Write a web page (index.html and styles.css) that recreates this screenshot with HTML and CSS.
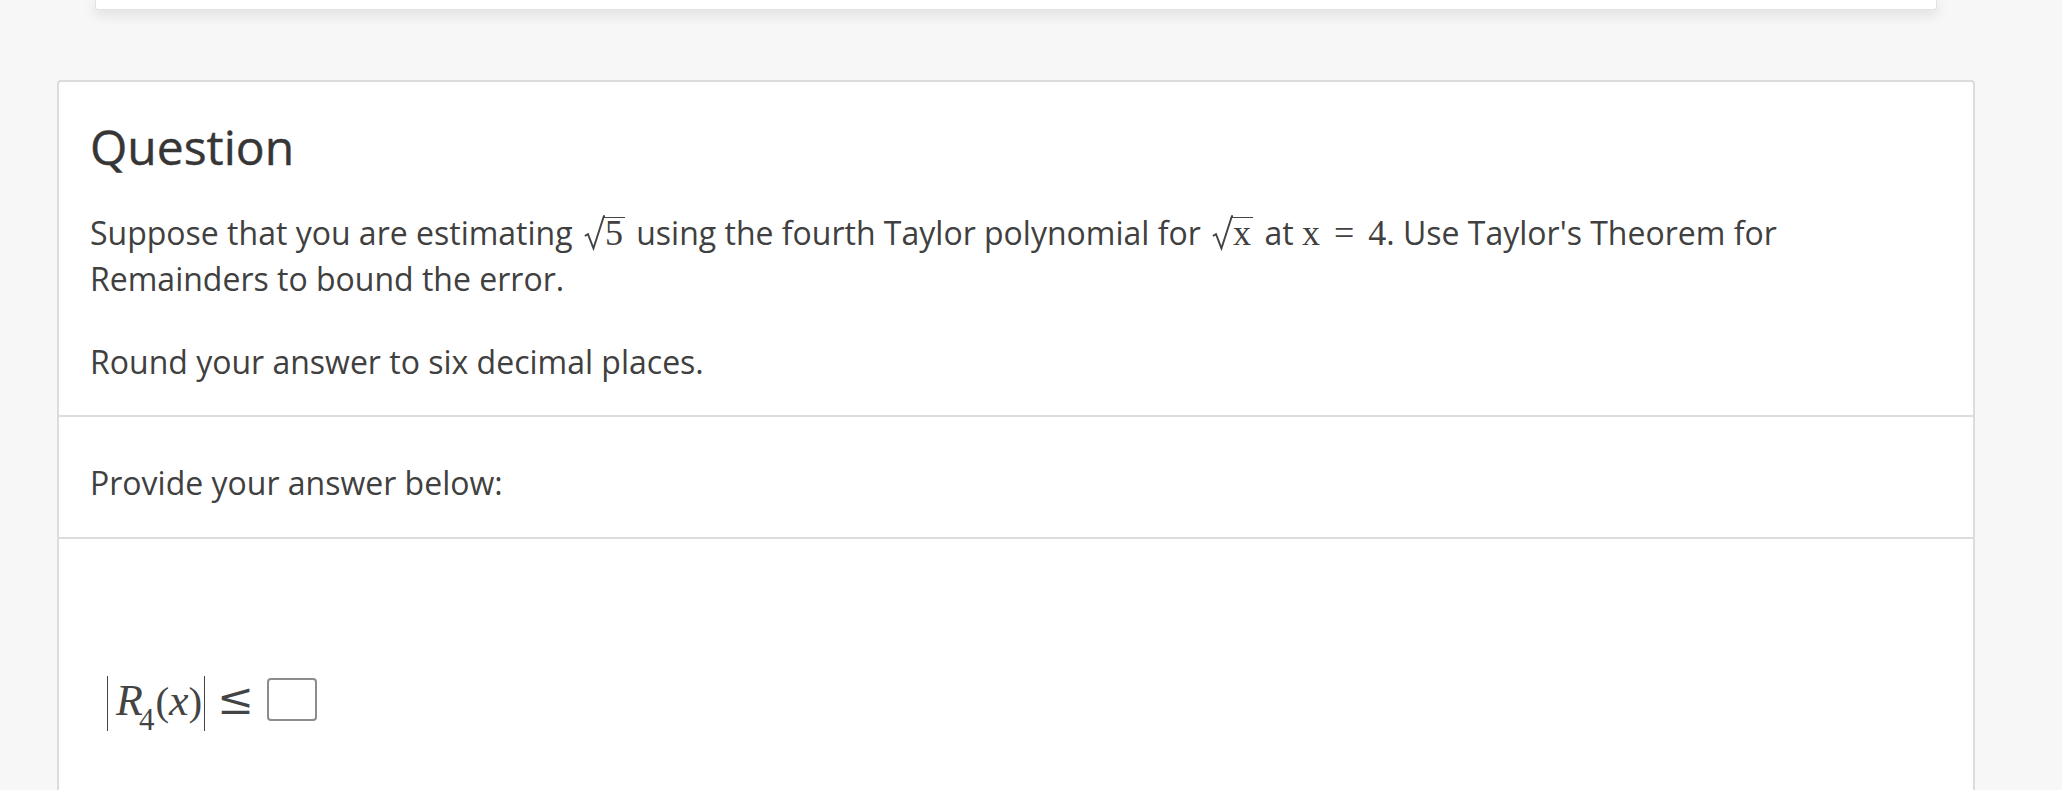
FILE: index.html
```html
<!DOCTYPE html>
<html lang="en">
<head>
<meta charset="utf-8">
<title>Question</title>
<link rel="stylesheet" href="styles.css">
</head>
<body>
  <div class="top-card"></div>
  <main class="question-card">
    <section class="section section-question">
      <h2 class="title">Question</h2>
      <p class="text">Suppose that you are estimating <span class="math"><span class="sqrt"><svg class="sqrt-sign" viewBox="0 0 20 36" preserveAspectRatio="none"><path d="M0.8 20.5 L3.8 18.6 L9 32.5 L18.9 1.2 L20 1.2" fill="none" stroke="#444" stroke-width="1.8" stroke-linejoin="miter"/></svg><span class="radicand">5</span></span></span> using the fourth Taylor polynomial for <span class="math"><span class="sqrt"><svg class="sqrt-sign" viewBox="0 0 20 36" preserveAspectRatio="none"><path d="M0.8 20.5 L3.8 18.6 L9 32.5 L18.9 1.2 L20 1.2" fill="none" stroke="#444" stroke-width="1.8" stroke-linejoin="miter"/></svg><span class="radicand">x</span></span></span> at <span class="math">x <span class="op">=</span> 4</span>. Use Taylor's Theorem for Remainders to bound the error.</p>
      <p class="text">Round your answer to six decimal places.</p>
    </section>
    <section class="section section-prompt">
      <p class="text">Provide your answer below:</p>
    </section>
    <section class="section section-answer">
      <div class="answer-row">
        <span class="abs"><span class="var">R</span><span class="sub">4</span><span class="paren">(</span><span class="var">x</span><span class="paren">)</span></span>
        <span class="leq">≤</span>
        <span class="input-box"></span>
      </div>
    </section>
  </main>
</body>
</html>
```

FILE: styles.css
```css
html, body {
  margin: 0;
  padding: 0;
}

body {
  background: #f7f7f7;
  font-family: "Open Sans", "Noto Sans", sans-serif;
  color: #404040;
  height: 790px;
  overflow: hidden;
}

.top-card {
  height: 9px;
  margin: 0 125px 0 95px;
  background: #fff;
  border: 1px solid #e2e2e2;
  border-top: none;
  border-radius: 0 0 3px 3px;
  box-shadow: 0 4px 14px rgba(0, 0, 0, 0.12);
}

.question-card {
  margin: 70px 87px 0 57px;
  background: #fff;
  border: 2px solid #dcdcdc;
  border-radius: 4px;
  min-height: 800px;
}

.section {
  padding: 32px 31px 32px 31px;
}

.section + .section {
  border-top: 2px solid #dcdcdc;
}

.section-question {
  padding-top: 36px;
  padding-bottom: 30px;
}

.title {
  margin: 0 0 34px 0;
  font-size: 48px;
  line-height: 58px;
  font-weight: 400;
  color: #363636;
  -webkit-text-stroke: 0.4px #363636;
}

.text {
  margin: 0;
  font-size: 32px;
  line-height: 46px;
}

.text + .text {
  margin-top: 37px;
}

.section-prompt {
  padding-top: 43px;
  padding-bottom: 31px;
}

.math {
  font-family: "Liberation Serif", "Times New Roman", serif;
  font-size: 36px;
  white-space: nowrap;
}

.sqrt {
  display: inline-block;
  position: relative;
  padding-left: 20px;
  margin: 0 3px 0 3px;
  line-height: 1;
}

.sqrt-sign {
  position: absolute;
  left: 0;
  top: 0;
  width: 21px;
  height: 37px;
}

.radicand {
  display: inline-block;
  line-height: 0.8;
  border-top: 1.8px solid #444;
  padding: 1px 2px 0 1px;
}

.op {
  margin: 0 5px;
}

.section-answer {
  padding-top: 137px;
  padding-left: 48px;
}

.answer-row {
  display: flex;
  align-items: center;
  font-family: "Liberation Serif", "Times New Roman", serif;
  color: #444;
}

.abs {
  display: flex;
  align-items: baseline;
  height: 55px;
  box-sizing: border-box;
  border-left: 1.8px solid #444;
  border-right: 1.8px solid #444;
  padding: 0 2px 0 8px;
  font-size: 44px;
  line-height: 50px;
}

.var {
  font-style: italic;
}

.paren,
.abs .var + .paren + .var {
  font-size: 41px;
}

.sub {
  font-size: 31px;
  position: relative;
  top: 15px;
  margin-left: -4px;
  margin-right: 1px;
}

.leq {
  font-family: "DejaVu Serif", "Liberation Serif", serif;
  font-size: 44px;
  line-height: 44px;
  margin: 0 13px 9px 12px;
}

.input-box {
  display: inline-block;
  width: 46px;
  height: 39px;
  border: 2px solid #8c8c8c;
  border-radius: 4px;
  margin-bottom: 8px;
}
```
